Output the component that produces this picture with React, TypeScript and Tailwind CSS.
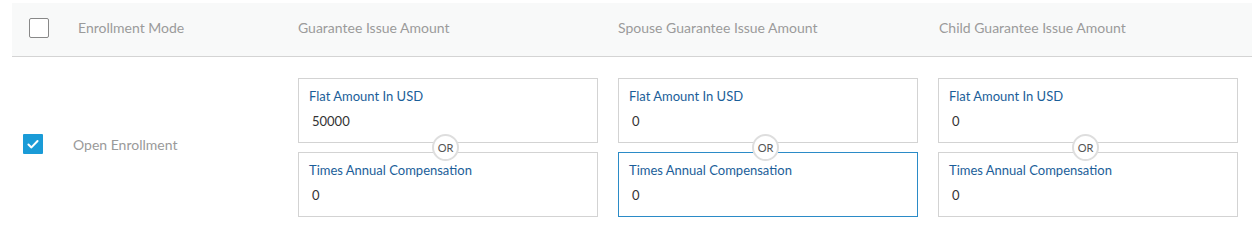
import React from "react";

function AmountCard({
  label,
  value,
  focused = false,
}: {
  label: string;
  value: string;
  focused?: boolean;
}) {
  return (
    <div
      className={
        "h-[65px] w-[300px] border bg-white px-[10px] pt-[8px] " +
        (focused ? "border-[#2b8bc7]" : "border-[#d3d3d3]")
      }
    >
      <div className="text-[13px] leading-[18px] text-[#1b5e99]">{label}</div>
      <div className="mt-[7px] pl-[3px] text-[13px] leading-[18px] text-[#333333]">{value}</div>
    </div>
  );
}

function AmountGroup({ flat, times, focusedSecond = false }: { flat: string; times: string; focusedSecond?: boolean }) {
  return (
    <div className="relative flex w-[300px] flex-col gap-[9px]">
      <AmountCard label="Flat Amount In USD" value={flat} />
      <AmountCard label="Times Annual Compensation" value={times} focused={focusedSecond} />
      <div className="absolute left-[134px] top-[56px] flex h-[27px] w-[27px] items-center justify-center rounded-full border-2 border-[#dedede] bg-white text-[11px] leading-none text-[#555555]">
        OR
      </div>
    </div>
  );
}

export default function App() {
  return (
    <div
      className="h-[233px] w-[1252px] bg-white pt-[3px]"
      style={{ fontFamily: "Lato, 'Open Sans', Arial, sans-serif" }}
    >
      <div className="ml-[12px] flex h-[54px] items-start border-b border-[#d4d4d4] bg-[#f8f9f9] pt-[15px]">
        <div className="w-[66px] pl-[17px]">
          <div className="h-[20px] w-[20px] rounded-[2px] border border-[#888888] bg-white" />
        </div>
        <div className="w-[220px] text-[14px] leading-[20px] text-[#9b9b9b]">Enrollment Mode</div>
        <div className="w-[320px] text-[14px] leading-[20px] text-[#9b9b9b]">Guarantee Issue Amount</div>
        <div className="w-[321px] text-[14px] leading-[20px] text-[#9b9b9b]">Spouse Guarantee Issue Amount</div>
        <div className="text-[14px] leading-[20px] text-[#9b9b9b]">Child Guarantee Issue Amount</div>
      </div>
      <div className="flex items-start pt-[21px]">
        <div className="mt-[56px] w-[73px] pl-[23px]">
          <div className="flex h-[20px] w-[20px] items-center justify-center rounded-[1px] bg-[#1a9bd7]">
            <svg width="14" height="14" viewBox="0 0 16 16" fill="none">
              <path d="M2.8 8.6l3.4 3.3L13.2 4.6" stroke="white" strokeWidth="2.3" strokeLinecap="round" strokeLinejoin="round" />
            </svg>
          </div>
        </div>
        <div className="mt-[57px] w-[225px] text-[14px] leading-[20px] text-[#9a9a9a]">Open Enrollment</div>
        <div className="flex gap-[20px]">
          <AmountGroup flat="50000" times="0" />
          <AmountGroup flat="0" times="0" focusedSecond />
          <AmountGroup flat="0" times="0" />
        </div>
      </div>
    </div>
  );
}
